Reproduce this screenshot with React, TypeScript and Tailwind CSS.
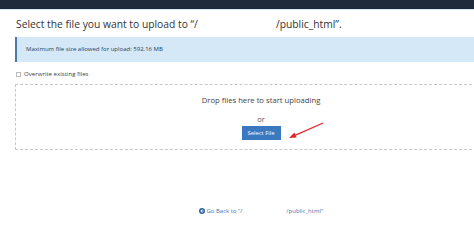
import React from "react";

export default function App() {
  return (
    <div className="relative w-[474px] h-[249px] overflow-hidden bg-white font-['Open_Sans',sans-serif] text-[#333]">
      <div className="h-[9px] bg-[#1f2a3b]" />
      <div className="h-px bg-[#d3e6f4]" />
      <div className="ml-[15px] w-[492px]">
        <h1 className="mt-[7px] pl-px text-[10.3px] leading-[14px] whitespace-nowrap text-[#333]">
          Select the file you want to upload to “/
          <span className="inline-block w-[78px]" />
          /public_html”.
        </h1>
        <div className="mt-[6px] flex h-[25px] items-center border-l-2 border-[#4a7aa6] bg-[#d4e8f7] pl-[9px] text-[6px] text-[#2d3e50]">
          Maximum file size allowed for upload: 592.16 MB
        </div>
        <div className="mt-[8px] flex h-[8px] items-center gap-[3px] pl-px text-[6.1px] text-[#444]">
          <span className="inline-block h-[5px] w-[5px] border border-[#bbb] bg-white" />
          <span>Overwrite existing files</span>
        </div>
        <div className="mt-[6px] flex h-[66px] flex-col items-center border border-dashed border-[#c8c8c8]">
          <div className="mt-[10px] text-[7.7px] leading-[10px] text-[#444]">
            Drop files here to start uploading
          </div>
          <div className="mt-[9px] text-[7.5px] leading-[10px] text-[#555]">or</div>
          <button className="mt-[2px] flex h-[14px] w-[39px] items-center justify-center bg-[#3a78bf] text-[5.9px] text-white">
            Select File
          </button>
        </div>
        <div className="mt-[57px] flex h-[8px] items-center justify-center text-[6px] text-[#3f74b5]">
          <svg width="6" height="6" viewBox="0 0 12 12" className="mr-[1.5px]">
            <circle cx="6" cy="6" r="6" fill="#2f64a6" />
            <path d="M6.6 3 L3.6 6 L6.6 9 M3.8 6 H9" stroke="white" strokeWidth="1.8" fill="none" />
          </svg>
          <span>Go Back to “/</span>
          <span className="inline-block w-[44px]" />
          <span>/public_html”</span>
        </div>
      </div>
      <svg
        className="pointer-events-none absolute left-0 top-0"
        width="474"
        height="249"
        viewBox="0 0 474 249"
      >
        <line x1="323" y1="123" x2="295" y2="135.3" stroke="#e0262b" strokeWidth="1.3" />
        <polygon points="289,138 296.6,137.6 294.4,132.6" fill="#e0262b" />
      </svg>
    </div>
  );
}
